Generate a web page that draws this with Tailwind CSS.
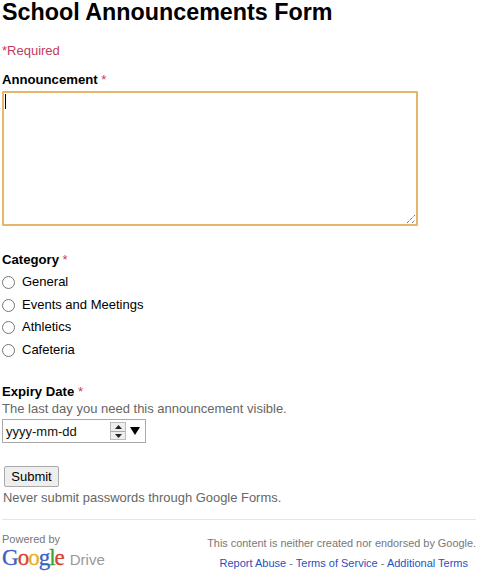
<!DOCTYPE html>
<html lang="en">
<head>
    <meta charset="UTF-8">
    <title>School Announcements Form</title>
    <script src="https://cdn.jsdelivr.net/npm/@tailwindcss/browser@4"></script>
</head>
<body class="bg-white font-['Liberation_Sans',Arial,sans-serif] text-[13px] text-black overflow-hidden">
    <div class="w-[478px] h-[571px] px-[2px] overflow-hidden">
        <!-- header -->
        <h1 class="text-[23.3px] leading-[24px] font-bold whitespace-nowrap">School Announcements Form</h1>
        <div class="mt-[19px] h-[15px] leading-[15px] text-[#c43b5c] text-[13px]">*Required</div>

        <!-- announcement -->
        <div class="mt-[14px] h-[15px] leading-[15px] font-bold text-[13.15px]">Announcement <span class="font-normal text-[#c43b5c]">*</span></div>
        <div class="relative mt-[4px] w-[416px] h-[135px] border-2 border-[#e5b568] rounded-[1px] bg-white">
            <div class="absolute left-[1px] top-[1px] w-px h-[15px] bg-black"></div>
            <svg class="absolute right-0 bottom-0" width="10" height="10" viewBox="0 0 10 10">
                <path d="M1 9 9 1M6 9 9 6" stroke="#333" stroke-width="1" stroke-dasharray="1 1" fill="none"/>
            </svg>
        </div>

        <!-- category -->
        <div class="mt-[26px] h-[15px] leading-[15px] font-bold text-[13.15px]">Category <span class="font-normal text-[#c43b5c]">*</span></div>
        <div class="mt-[3.5px] flex flex-col">
            <label class="flex items-center h-[22.6px] gap-[7px]"><span class="mt-[2px] w-[13px] h-[13px] rounded-full border border-[#777] bg-white"></span>General</label>
            <label class="flex items-center h-[22.6px] gap-[7px]"><span class="mt-[2px] w-[13px] h-[13px] rounded-full border border-[#777] bg-white"></span>Events and Meetings</label>
            <label class="flex items-center h-[22.6px] gap-[7px]"><span class="mt-[2px] w-[13px] h-[13px] rounded-full border border-[#777] bg-white"></span>Athletics</label>
            <label class="flex items-center h-[22.6px] gap-[7px]"><span class="mt-[2px] w-[13px] h-[13px] rounded-full border border-[#777] bg-white"></span>Cafeteria</label>
        </div>

        <!-- expiry date -->
        <div class="mt-[23.5px] h-[15px] leading-[15px] font-bold text-[13.15px]">Expiry Date <span class="font-normal text-[#c43b5c]">*</span></div>
        <div class="mt-[2px] h-[15px] leading-[15px] text-[#666]">The last day you need this announcement visible.</div>
        <div class="mt-[3px] flex items-center w-[144px] h-[24px] border border-[#a9a9a9] pl-[3px]">
            <span class="flex-1 text-[#111]">yyyy-mm-dd</span>
            <span class="flex flex-col w-[16px] h-[18px] border border-[#bbb] bg-[#eee]">
                <span class="flex-1 flex items-center justify-center border-b border-[#aaa]">
                    <svg width="7" height="4" viewBox="0 0 7 4"><path d="M3.5 0 7 4H0z" fill="#222"/></svg>
                </span>
                <span class="flex-1 flex items-center justify-center">
                    <svg width="7" height="4" viewBox="0 0 7 4"><path d="M0 0h7L3.5 4z" fill="#222"/></svg>
                </span>
            </span>
            <span class="w-[19px] pr-px flex justify-center">
                <svg width="10" height="8" viewBox="0 0 10 8"><path d="M0 0h10L5 8z" fill="#000"/></svg>
            </span>
        </div>

        <!-- submit -->
        <button class="block mt-[23px] ml-[2px] w-[55px] h-[21px] border border-[#aaa] rounded-[2px] bg-[#eee] text-[13px] leading-[19px] text-black">Submit</button>
        <div class="mt-[3px] ml-px h-[15px] leading-[15px] text-[#666] text-[12.95px]">Never submit passwords through Google Forms.</div>

        <!-- footer -->
        <div class="mt-[14px] border-t border-[#e5e5e5] flex justify-between">
            <div class="pt-[13px]">
                <div class="h-[13px] leading-[13px] text-[11px] text-[#777]">Powered by</div>
                <div class="flex items-baseline gap-[6px] h-[24px]">
                    <span class="font-['Liberation_Serif',serif] text-[23px] leading-[24px] tracking-[-1px] [-webkit-text-stroke:0.3px]"><span class="text-[#3a5fc4]">G</span><span class="text-[#d8432e]">o</span><span class="text-[#e8b020]">o</span><span class="text-[#3a5fc4]">g</span><span class="text-[#3f9e3f]">l</span><span class="text-[#d8432e]">e</span></span>
                    <span class="text-[15px] text-[#999]">Drive</span>
                </div>
            </div>
            <div class="pt-[16px] text-[11px] flex flex-col items-end">
                <div class="h-[15px] leading-[15px] text-[10.9px] text-[#777]">This content is neither created nor endorsed by Google.</div>
                <div class="mt-[5px] h-[15px] leading-[15px] pr-[8px] text-[#777]"><a href="#" class="text-[#2a4fc0]">Report Abuse</a> - <a href="#" class="text-[#2a4fc0]">Terms of Service</a> - <a href="#" class="text-[#2a4fc0]">Additional Terms</a></div>
            </div>
        </div>
    </div>
</body>
</html>
